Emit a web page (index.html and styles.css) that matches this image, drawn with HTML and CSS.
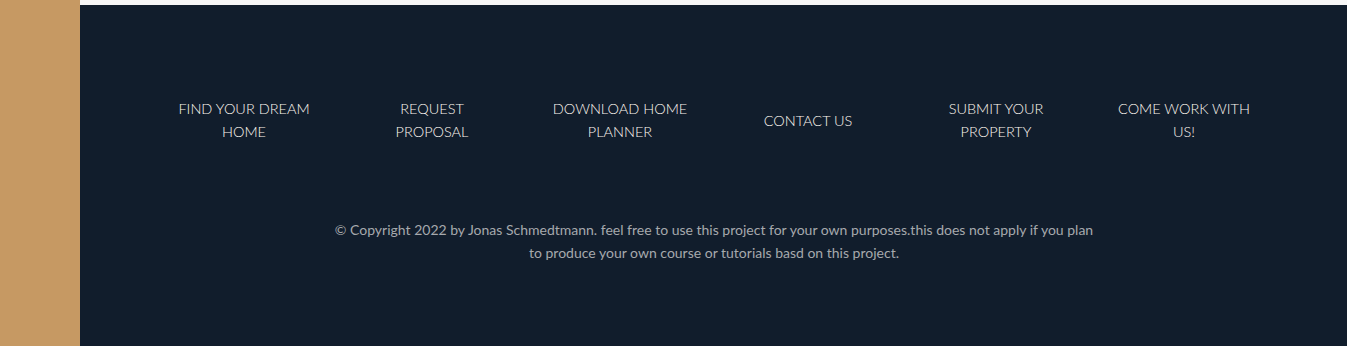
FILE: index.html
```html
<!DOCTYPE html>
<html lang="en">
<head>
<meta charset="utf-8">
<title>Footer</title>
<link rel="stylesheet" href="styles.css">
</head>
<body>
<div class="page">
  <aside class="side"></aside>
  <div class="main">
    <div class="topstrip"></div>
    <footer class="footer">
      <nav class="footer-nav">
        <a class="nav-link" href="#">Find your dream home</a>
        <a class="nav-link" href="#">Request proposal</a>
        <a class="nav-link" href="#">Download home planner</a>
        <a class="nav-link" href="#">Contact us</a>
        <a class="nav-link" href="#">Submit your property</a>
        <a class="nav-link" href="#">Come work with us!</a>
      </nav>
      <p class="copyright">© Copyright 2022 by Jonas Schmedtmann. feel free to use this project for your own purposes.this does not apply if you plan to produce your own course or tutorials basd on this project.</p>
    </footer>
  </div>
</div>
</body>
</html>
```
FILE: styles.css
```css
* { box-sizing: border-box; }
html, body { margin: 0; padding: 0; }
body { background: #111d2c; overflow: hidden; }
.page { display: flex; width: 1347px; height: 346px; }
.side { width: 80px; flex: none; background: #c69963; }
.main { flex: 1; display: flex; flex-direction: column; }
.topstrip { height: 5px; background: #f7f7f7; flex: none; }
.footer {
  flex: 1;
  background: #111d2c;
  padding-top: 92px;
  padding-left: 1px;
  display: flex;
  flex-direction: column;
  align-items: center;
}
.footer-nav {
  display: grid;
  grid-template-columns: repeat(6, 188px);
  align-items: center;
}
.nav-link {
  display: block;
  padding: 0 25px;
  text-align: center;
  text-transform: uppercase;
  text-decoration: none;
  color: #fdf6ee;
  font-family: Lato, "Liberation Sans", sans-serif;
  font-weight: 300;
  font-size: 14.5px;
  line-height: 23px;
}
.copyright {
  margin: 75px 0 0;
  width: 770px;
  text-align: center;
  color: #a6a9ad;
  font-family: Lato, "Liberation Sans", sans-serif;
  font-size: 14px;
  line-height: 23px;
}
```
